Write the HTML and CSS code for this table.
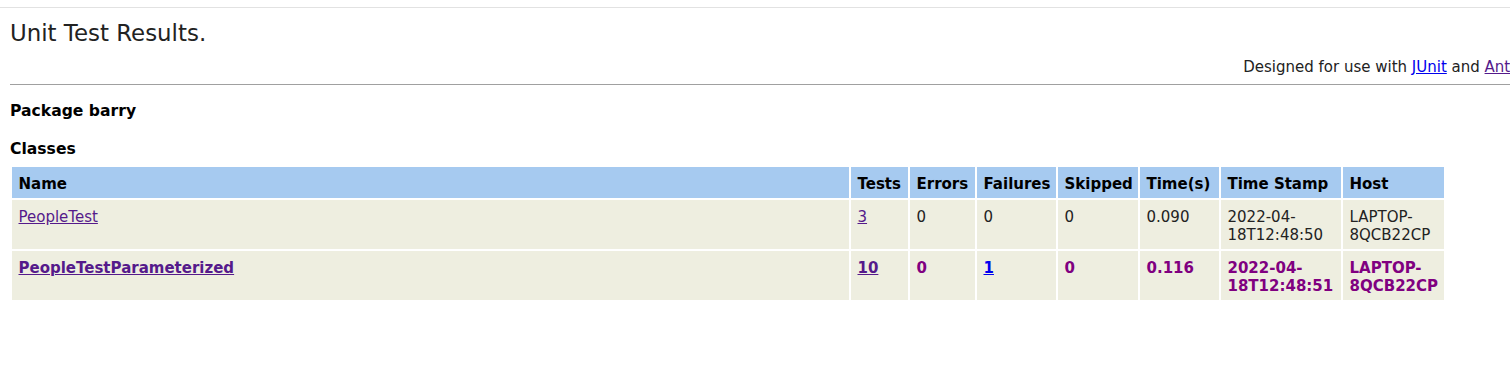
FILE: index.html
```html
<!DOCTYPE html>
<html lang="en">
<head>
<meta charset="utf-8">
<title>Unit Test Results.</title>
<link rel="stylesheet" href="styles.css">
</head>
<body>
<div class="topline"></div>
<main class="page">
  <h1 class="title">Unit Test Results.</h1>
  <div class="credits">Designed for use with <a class="link-new" href="#junit">JUnit</a> and <a class="link-seen" href="#ant">Ant</a>.</div>
  <hr class="rule">
  <h3 class="section first">Package barry</h3>
  <h3 class="section">Classes</h3>
  <table class="details">
    <thead>
      <tr>
        <th class="c-name">Name</th>
        <th class="c-tests">Tests</th>
        <th class="c-errors">Errors</th>
        <th class="c-fail">Failures</th>
        <th class="c-skip">Skipped</th>
        <th class="c-time">Time(s)</th>
        <th class="c-stamp">Time Stamp</th>
        <th class="c-host">Host</th>
      </tr>
    </thead>
    <tbody>
      <tr class="pass">
        <td><a class="link-seen" href="#PeopleTest">PeopleTest</a></td>
        <td><a class="link-seen" href="#PeopleTest-tests">3</a></td>
        <td>0</td>
        <td>0</td>
        <td>0</td>
        <td>0.090</td>
        <td>2022-04-18T12:48:50</td>
        <td>LAPTOP-8QCB22CP</td>
      </tr>
      <tr class="failure">
        <td><a class="link-seen" href="#PeopleTestParameterized">PeopleTestParameterized</a></td>
        <td><a class="link-seen" href="#PeopleTestParameterized-tests">10</a></td>
        <td>0</td>
        <td><a class="link-new" href="#PeopleTestParameterized-failures">1</a></td>
        <td>0</td>
        <td>0.116</td>
        <td>2022-04-18T12:48:51</td>
        <td>LAPTOP-8QCB22CP</td>
      </tr>
    </tbody>
  </table>
</main>
</body>
</html>
```

FILE: styles.css
```css
html {
  overflow-x: hidden;
}

body {
  margin: 0;
  background: #ffffff;
  color: #222222;
  font-family: "DejaVu Sans", Verdana, sans-serif;
  font-size: 15px;
}

.topline {
  height: 7px;
  border-bottom: 1px solid #e2e2e2;
}

.page {
  width: 1505px;
  padding-left: 10px;
}

.title {
  margin: 12px 0 0;
  font-size: 22.9px;
  font-weight: normal;
  line-height: 26px;
}

.credits {
  margin-top: 12px;
  line-height: 18px;
  text-align: right;
  white-space: nowrap;
}

.link-new {
  color: #0000ee;
}

.link-seen {
  color: #551a8b;
}

.rule {
  height: 0;
  margin: 8px 0 0;
  border: 0;
  border-top: 1px solid #a0a0a0;
}

.section {
  margin: 18px 0 0;
  font-size: 15.6px;
  font-weight: bold;
  line-height: 20px;
  color: #000000;
}

.section.first {
  margin-top: 16px;
}

.details {
  margin-top: 6px;
  table-layout: fixed;
  width: 1436px;
  border-spacing: 2px;
}

.details th,
.details td {
  box-sizing: border-box;
  padding: 8px 5px 5px 6.5px;
  line-height: 18px;
  text-align: left;
  vertical-align: top;
}

.details th {
  background: #a6caf0;
  color: #000000;
  font-weight: bold;
}

.details td {
  background: #eeeee0;
}

.c-name { width: 837px; }
.c-tests { width: 57px; }
.c-errors { width: 65px; }
.c-fail { width: 79px; }
.c-skip { width: 80px; }
.c-time { width: 79px; }
.c-stamp { width: 120px; }
.c-host { width: 101px; }

.failure td {
  color: #800080;
  font-weight: bold;
}

.failure .link-seen {
  color: #551a8b;
}

.failure .link-new {
  color: #0000ee;
}
```
